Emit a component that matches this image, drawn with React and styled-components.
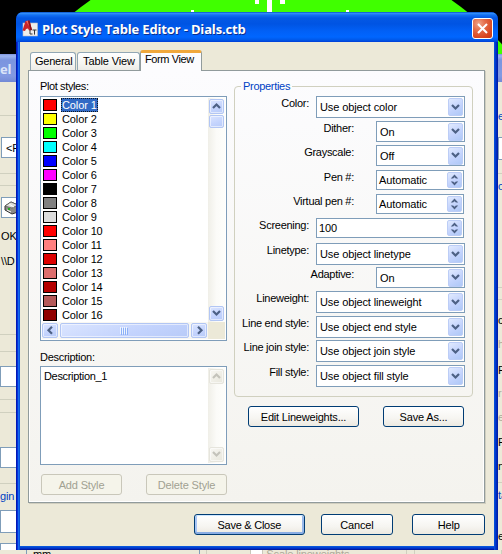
import React from "react";
import styled, { createGlobalStyle, css } from "styled-components";

const Global = createGlobalStyle`
  *, *::before, *::after { box-sizing: border-box; }
  body { margin: 0; overflow: hidden; background: #000; }
  #root { font: 11px/14px "Liberation Sans", Arial, sans-serif; color: #000; letter-spacing: -0.12px; }
`;

const Desktop = styled.div`
  position: relative;
  width: 502px;
  height: 554px;
  overflow: hidden;
  background: #000;
`;
const Drawing = styled.svg`
  position: absolute;
  left: 0;
  top: 0;
`;

/* ---------- window behind the dialog ---------- */
const BackWindow = styled.div`
  position: absolute;
  left: 0;
  top: 54px;
  width: 502px;
  height: 500px;
  background: #ece9d8;
  overflow: hidden;
`;
const BackTitle = styled.div`
  height: 28px;
  padding-top: 7px;
  background: linear-gradient(#7c93dc 0, #9db5f0 2px, #7b95df 6px, #8299e2 22px, #7289d5 100%);
  color: #dbe4f8;
  font: bold 13px/17px "Open Sans", sans-serif;
`;
const BackBody = styled.div`
  display: flex;
  justify-content: space-between;
  height: 468px;
`;
const Strip = styled.div`
  width: ${(p) => p.$w}px;
  overflow: hidden;
  white-space: nowrap;
`;
const Rule = styled.div`
  height: 1px;
  margin-top: ${(p) => p.$gap}px;
  background: #d0d0bf;
`;
const BackField = styled.div`
  display: flex;
  align-items: center;
  height: ${(p) => p.$h}px;
  margin: ${(p) => p.$gap}px -4px 0 ${(p) => p.$x || 0}px;
  padding-left: ${(p) => p.$pad || 0}px;
  border: 1px solid #7f9db9;
  background: #fff;
`;
const BackText = styled.div`
  height: 14px;
  margin-top: ${(p) => p.$gap}px;
  padding-left: ${(p) => p.$x || 0}px;
  color: ${(p) => p.$c || "#000"};
`;
const BottomEdge = styled.div`
  display: flex;
  height: 4px;
  padding-left: 26px;
  overflow: hidden;
  line-height: 10px;
`;
const BottomCell = styled.div`
  width: ${(p) => p.$w}px;
  height: 14px;
  margin-top: -1px;
  margin-right: ${(p) => p.$gap || 0}px;
  padding-left: ${(p) => p.$pad || 0}px;
  border: solid ${(p) => (p.$field ? "#7f9db9" : "#d0d0bf")};
  border-width: 0 1px;
  color: ${(p) => (p.$field ? "#000" : "#aca899")};
`;
const CheckBit = styled.span`
  display: inline-block;
  width: 13px;
  height: 10px;
  margin-right: 3px;
  background: #fff;
  border: solid #c9c7ba;
  border-width: 0 1px;
  vertical-align: top;
`;

/* ---------- dialog frame ---------- */
const Dialog = styled.div`
  position: absolute;
  left: 16px;
  top: 12px;
  width: 482px;
  height: 538px;
  border-radius: 7px 7px 0 0;
  background: linear-gradient(90deg, #0019b5 0 1px, #0831d9 1px 2px, #166aee 2px 3px, #0855dd 3px 4px, #0855dd 478px, #0144d0 479px, #0030c8 480px, #0019a0 100%);
`;
const TitleBar = styled.div`
  display: flex;
  align-items: flex-start;
  height: 30px;
  padding: 6px 5px 0 6px;
  border-radius: 7px 7px 0 0;
  background: linear-gradient(#0a50c8 0, #2f8cf8 1.5px, #1470f2 3px, #0458e4 6px, #0054e3 12px, #0160f6 19px, #0066ff 25px, #0058e8 28px, #003dd7 100%);
`;
const IconSvg = styled.svg`
  margin-top: 1px;
`;
const TitleText = styled.div`
  flex: 1;
  padding: 0 0 0 4px;
  color: #fff;
  font: bold 13px/22px "Open Sans", sans-serif;
  letter-spacing: -0.16px;
  white-space: nowrap;
  text-shadow: 1px 1px 0 #0b2f8f;
`;
const CloseButton = styled.div`
  display: grid;
  place-items: center;
  width: 21px;
  height: 21px;
  border: 1px solid #fff;
  border-radius: 3px;
  background: radial-gradient(circle at 30% 25%, #f0a488 0, #e46b48 35%, #d8431c 75%, #c43a18 100%);
`;
const Client = styled.div`
  width: 474px;
  height: 504px;
  margin: 0 4px;
  padding: 8px 9px 0 8px;
  background: #ece9d8;
  box-shadow: 0 1px 0 #0855dd, 0 2px 0 #0144d0, 0 3px 0 #0030c8, 0 4px 0 #0019a0;
`;
const Tabs = styled.div`
  display: flex;
  align-items: flex-end;
  height: 20px;
  padding-left: 2px;
`;
const Tab = styled.div`
  width: ${(p) => p.$w}px;
  height: 18px;
  margin-right: 1px;
  padding: 1px 0 0 ${(p) => p.$pad}px;
  border: 1px solid #91a7b4;
  border-bottom: 0;
  border-radius: 3px 3px 0 0;
  background: linear-gradient(#fff, #f6f6f2 60%, #ecebe6);
  letter-spacing: ${(p) => p.$ls || 0}px;
  white-space: nowrap;
  ${(p) =>
    p.$active &&
    css`
      position: relative;
      height: 21px;
      margin: 0 0 -1px -1px;
      border-color: #919b9c;
      border-top: 3px solid #f0a83c;
      background: #fcfcfe;
      padding-top: 0;
      line-height: 13px;
    `}
`;
const Panel = styled.div`
  display: flex;
  height: 433px;
  padding: 8px 0 0 11px;
  border: 1px solid #919b9c;
  background: linear-gradient(#fcfcfe, #f4f3ee);
  box-shadow: inset 1px 0 0 #fff, inset -1px -1px 0 #fff, 1px 1px 0 #d0cebf;
`;
const LeftColumn = styled.div`
  width: 187px;
  margin-right: 7px;
`;
const RightColumn = styled.div`
  width: 239px;
  padding-top: 7px;
`;
const Label = styled.div`
  margin: ${(p) => p.$m};
  letter-spacing: ${(p) => p.$ls}px;
`;

/* ---------- list and scroll bars ---------- */
const ListBox = styled.div`
  display: grid;
  grid-template: 1fr auto / 1fr 17px;
  height: ${(p) => p.$h}px;
  padding: 1px;
  border: 1px solid #7f9db9;
  background: #fff;
`;
const Items = styled.div`
  overflow: hidden;
`;
const Item = styled.div`
  display: flex;
  align-items: center;
  height: 14px;
  padding-left: 1px;
`;
const Swatch = styled.div`
  width: 14px;
  height: 12px;
  margin-right: 4px;
  border: 1px solid #000;
  background: ${(p) => p.$c};
`;
const ItemText = styled.div`
  height: 14px;
  border: 1px solid transparent;
  line-height: 13px;
  letter-spacing: -0.12px;
  ${(p) =>
    p.$selected &&
    css`
      background: #316ac5;
      color: #fff;
      border: 1px dotted #101820;
    `}
`;
const VBar = styled.div`
  display: flex;
  flex-direction: column;
  align-items: center;
  gap: 1px;
  padding: 1px 0;
  background: linear-gradient(90deg, #f0efe8, #fbfbf8 50%, #fefefb);
`;
const HBar = styled.div`
  display: flex;
  gap: 2px;
  height: 17px;
  padding: 1px 1px 1px 0;
  background: #f8f7f2;
`;
const ScrollPart = styled.div`
  display: grid;
  place-items: center;
  flex: ${(p) => (p.$w ? "none" : "1")};
  width: ${(p) => (p.$w ? `${p.$w}px` : "auto")};
  height: ${(p) => p.$h || 15}px;
  border: 1px solid ${(p) => (p.$off ? "#e6e5dd" : "#b2c6f4")};
  border-radius: 2px;
  background: ${(p) => (p.$off ? "linear-gradient(135deg, #f8f7f3, #e8e7dc)" : "linear-gradient(160deg, #dbe5ff, #c3d3fd 60%, #b8cbf8)")};
  box-shadow: inset 0 0 0 1px #fff8;
`;
const Spacer = styled.div`
  flex: 1;
`;
const Corner = styled.div`
  background: #ece9d8;
`;
const TextArea = styled.div`
  padding: 1px 0 0 2px;
  letter-spacing: -0.32px;
`;

/* ---------- properties ---------- */
const Group = styled.div`
  height: 311px;
  padding: 9px 7px 0 0;
  border: 1px solid #d0d0bf;
  border-radius: 4px;
`;
const Legend = styled.div`
  width: 51px;
  height: 14px;
  margin: -17px 0 3px 6px;
  padding-left: 2px;
  background: #fcfcfd;
  color: #0042c4;
  letter-spacing: -0.3px;
`;
const Rows = styled.div`
  display: grid;
  grid-template-rows: 25px 24px 25px 24px 24px 25px 24px 24px 25px 24px 25px 22px;
`;
const Row = styled.div`
  display: flex;
  justify-content: flex-end;
`;
const RowLabel = styled.div`
  margin-right: ${(p) => (p.$narrow ? 22 : 7)}px;
  letter-spacing: -0.27px;
`;
const Field = styled.div`
  display: flex;
  align-items: center;
  justify-content: space-between;
  width: ${(p) => (p.$narrow ? 89 : 149)}px;
  height: ${(p) => (p.$spin ? 20 : p.$narrow ? 21 : 22)}px;
  padding: 0 1px 0 ${(p) => (p.$spin ? 2 : 3)}px;
  border: 1px solid #7f9db9;
  background: #fff;
  ${(p) =>
    p.$spin &&
    css`
      width: ${p.$narrow ? 88 : 148}px;
      margin-right: 1px;
    `}
`;
const DropButton = styled.div`
  display: grid;
  place-items: center;
  width: 15px;
  height: ${(p) => (p.$spin ? 16 : 18)}px;
  border: 1px solid #bccdf6;
  border-radius: 2px;
  background: linear-gradient(150deg, #e1eafe, #c3d3fd 55%, #aec8f7);
`;

/* ---------- buttons ---------- */
const ButtonRow = styled.div`
  display: flex;
  gap: ${(p) => p.$gap}px;
  margin: ${(p) => p.$m};
`;
const Button = styled.div`
  display: flex;
  align-items: center;
  justify-content: center;
  width: ${(p) => p.$w}px;
  height: 21px;
  border: 1px solid #003c74;
  border-radius: 3px;
  background: linear-gradient(#fff, #f6f5f1 60%, #ece9e1);
  letter-spacing: ${(p) => p.$ls ?? -0.15}px;
  white-space: nowrap;
  ${(p) => p.$primary && css`box-shadow: inset 0 1px 0 #cee7ff, inset 0 -2px 0 #89ade4, inset 2px 0 0 #a9c6f5, inset -2px 0 0 #98b8ea;`}
  ${(p) => p.$off && css`border-color: #c9c7ba; background: #f5f4ea; color: #a1a192;`}
`;
const HelpButton = styled(Button)`
  margin-left: 3px;
`;

const paths = {
  down: "M1 2 L4.5 5.5 L8 2",
  up: "M1 6 L4.5 2.5 L8 6",
  left: "M6 0.8 L2.5 4.3 L6 7.8",
  right: "M3 0.8 L6.5 4.3 L3 7.8",
};
const Chevron = ({ dir, off }) => (
  <svg width="9" height="9" viewBox="0 0 9 9">
    <path d={paths[dir]} fill="none" stroke={off ? "#c4c3bb" : "#4d6185"} strokeWidth="2.2" />
  </svg>
);
const SpinArrows = () => (
  <svg width="9" height="14" viewBox="0 0 9 14">
    <path d="M.8 5.4 L4.5 1.5 L8.2 5.4 H5.9 L4.5 4.2 L3.1 5.4Z M.8 8.6 L4.5 12.5 L8.2 8.6 H5.9 L4.5 9.8 L3.1 8.6Z" fill="#4d6185" />
  </svg>
);
const Grip = () => (
  <svg width="9" height="8" viewBox="0 0 9 8">
    <path d="M.5 0V7M2.5 0V7M4.5 0V7M6.5 0V7" stroke="#eef4fe" />
    <path d="M1.5 1V8M3.5 1V8M5.5 1V8M7.5 1V8" stroke="#8cb0f8" />
  </svg>
);
const AppIcon = () => (
  <IconSvg width="16" height="18" viewBox="0 0 16 18">
    <rect x="1" y="4" width="14.5" height="13" fill="#eeeeec" stroke="#b9bdc5" strokeWidth=".6" />
    <path d="M.5 11.5 L3.5 2 L7.5 1.5 L10 11 L7 11.5 L6 9.5 L4 10 L3 12Z" fill="#c9242a" />
    <path d="M4 2 L6.8 7 L6 1.7Z" fill="#ef6a60" />
    <path d="M6 1.7 L7.5 1.5 L10 11 L8.5 11.3Z" fill="#8a1218" />
    <path d="M8 10.5V15H10.5M10.5 11H14.5M12.5 11V15.6" fill="none" stroke="#35363a" strokeWidth="1" />
  </IconSvg>
);
const Printer = () => (
  <svg width="14" height="15" viewBox="0 0 14 15">
    <path d="M1 6 L7 2 L14 5 V12 L8 14 L1 10Z" fill="#8b8b86" stroke="#333" />
    <path d="M1 6 L7 2 L14 5 L8 8Z" fill="#deded8" stroke="#555" strokeWidth=".7" />
    <path d="M3 10 L7 12 M5 4 L10 7" stroke="#fff" />
    <rect x="4" y="8" width="2" height="2" fill="#2a2" />
  </svg>
);

const colors = ["#f00", "#ff0", "#0f0", "#0ff", "#00f", "#f0f", "#000", "#808080", "#dcdcdc", "#f00", "#ff7f7f", "#dd0000", "#dd6e6e", "#b40000", "#b45a5a", "#900000"];

const properties = [
  { label: "Color:", value: "Use object color" },
  { label: "Dither:", value: "On", narrow: true },
  { label: "Grayscale:", value: "Off", narrow: true },
  { label: "Pen #:", value: "Automatic", narrow: true, spin: true },
  { label: "Virtual pen #:", value: "Automatic", narrow: true, spin: true },
  { label: "Screening:", value: "100", spin: true },
  { label: "Linetype:", value: "Use object linetype" },
  { label: "Adaptive:", value: "On", narrow: true },
  { label: "Lineweight:", value: "Use object lineweight" },
  { label: "Line end style:", value: "Use object end style" },
  { label: "Line join style:", value: "Use object join style" },
  { label: "Fill style:", value: "Use object fill style" },
];

export default function App() {
  return (
    <Desktop>
      <Global />
      <Drawing width="502" height="60" viewBox="0 0 502 60">
        <circle cx="271" cy="257" r="314" fill="#40ff00" />
        <path d="M255 0h4v4h-4zM267 0h5v12h-5zM280 0h5v4h-5zM346 10h3v2h-3zM191 10h3v2h-3z" fill="#fff" />
      </Drawing>
      <BackWindow>
        <BackTitle>el</BackTitle>
        <BackBody>
          <Strip $w={16}>
            <Rule $gap={33} />
            <BackField $gap={21} $h={21} $x={1} $pad={4}>&lt;F</BackField>
            <Rule $gap={15} />
            <Rule $gap={11} />
            <BackField $gap={11} $h={21} $x={1} $pad={2}><Printer /></BackField>
            <BackText $gap={11} $x={1}>OKI</BackText>
            <BackText $gap={11} $x={1}>\\D</BackText>
            <Rule $gap={66} />
            <Rule $gap={16} />
            <BackField $gap={14} $h={21} />
            <Rule $gap={12} />
            <Rule $gap={12} />
            <BackField $gap={34} $h={21} />
            <Rule $gap={15} />
            <BackText $gap={5} $c="#0042c4">gin</BackText>
            <BackField $gap={7} $h={23} />
            <BackField $gap={10} $h={21} />
          </Strip>
          <Strip $w={4}>
            <BackText $gap={27} $c="#0042c4">e</BackText>
            <BackField $gap={14} $h={23} />
            <Rule $gap={13} />
            <BackText $gap={5} $c="#0042c4">o</BackText>
            <Rule $gap={94} />
            <Rule $gap={11} />
            <BackText $gap={13}>c</BackText>
            <BackText $gap={10} $c="#aca899">h</BackText>
            <BackText $gap={12}>P</BackText>
            <BackText $gap={9} $c="#aca899">r</BackText>
            <BackText $gap={10} $c="#aca899">e</BackText>
            <BackText $gap={11}>P</BackText>
            <BackText $gap={10}>n</BackText>
            <Rule $gap={9} />
            <BackText $gap={5} $c="#0042c4">ta</BackText>
            <BackText $gap={27}>e</BackText>
          </Strip>
        </BackBody>
        <BottomEdge>
          <BottomCell $w={178} $gap={6} $pad={6} $field>mm</BottomCell>
          <BottomCell $w={204} $gap={7} $pad={43}><CheckBit />Scale lineweights</BottomCell>
          <BottomCell $w={90} />
        </BottomEdge>
      </BackWindow>

      <Dialog>
        <TitleBar>
          <AppIcon />
          <TitleText>Plot Style Table Editor - Dials.ctb</TitleText>
          <CloseButton>
            <svg width="13" height="13" viewBox="0 0 13 13">
              <path d="M2 2L11 11M11 2L2 11" stroke="#fff" strokeWidth="2.1" />
            </svg>
          </CloseButton>
        </TitleBar>
        <Client>
          <Tabs>
            <Tab $w={46} $pad={4} $ls={-0.25}>General</Tab>
            <Tab $w={63} $pad={5} $ls={-0.12}>Table View</Tab>
            <Tab $w={62} $pad={4} $ls={-0.4} $active>Form View</Tab>
          </Tabs>
          <Panel>
            <LeftColumn>
              <Label $m="0 0 3px" $ls={-0.38}>Plot styles:</Label>
              <ListBox $h={245}>
                <Items>
                  {colors.map((c, i) => (
                    <Item key={i}>
                      <Swatch $c={c} />
                      <ItemText $selected={i === 0}>Color {i + 1}</ItemText>
                    </Item>
                  ))}
                </Items>
                <VBar>
                  <ScrollPart $w={15}><Chevron dir="up" /></ScrollPart>
                  <ScrollPart $w={15} $h={13} />
                  <Spacer />
                  <ScrollPart $w={15}><Chevron dir="down" /></ScrollPart>
                </VBar>
                <HBar>
                  <ScrollPart $w={16}><Chevron dir="left" /></ScrollPart>
                  <ScrollPart><Grip /></ScrollPart>
                  <ScrollPart $w={16}><Chevron dir="right" /></ScrollPart>
                </HBar>
                <Corner />
              </ListBox>
              <Label $m="9px 0 2px" $ls={-0.28}>Description:</Label>
              <ListBox $h={99}>
                <TextArea>Description_1</TextArea>
                <VBar>
                  <ScrollPart $w={15} $off><Chevron dir="up" off /></ScrollPart>
                  <Spacer />
                  <ScrollPart $w={15} $off><Chevron dir="down" off /></ScrollPart>
                </VBar>
              </ListBox>
              <ButtonRow $gap={24} $m="9px 0 0 1px">
                <Button $w={81} $off>Add Style</Button>
                <Button $w={81} $off>Delete Style</Button>
              </ButtonRow>
            </LeftColumn>
            <RightColumn>
              <Group>
                <Legend>Properties</Legend>
                <Rows>
                  {properties.map((p) => (
                    <Row key={p.label}>
                      <RowLabel $narrow={p.narrow}>{p.label}</RowLabel>
                      <Field $narrow={p.narrow} $spin={p.spin}>
                        {p.value}
                        <DropButton $spin={p.spin}>{p.spin ? <SpinArrows /> : <Chevron dir="down" />}</DropButton>
                      </Field>
                    </Row>
                  ))}
                </Rows>
              </Group>
              <ButtonRow $gap={24} $m="9px 0 0 14px">
                <Button $w={111} $ls={-0.2}>Edit Lineweights...</Button>
                <Button $w={81}>Save As...</Button>
              </ButtonRow>
            </RightColumn>
          </Panel>
          <ButtonRow $gap={16} $m="11px 0 0 166px">
            <Button $w={111} $ls={-0.25} $primary>Save &amp; Close</Button>
            <Button $w={73}>Cancel</Button>
            <HelpButton $w={73}>Help</HelpButton>
          </ButtonRow>
        </Client>
      </Dialog>
    </Desktop>
  );
}
